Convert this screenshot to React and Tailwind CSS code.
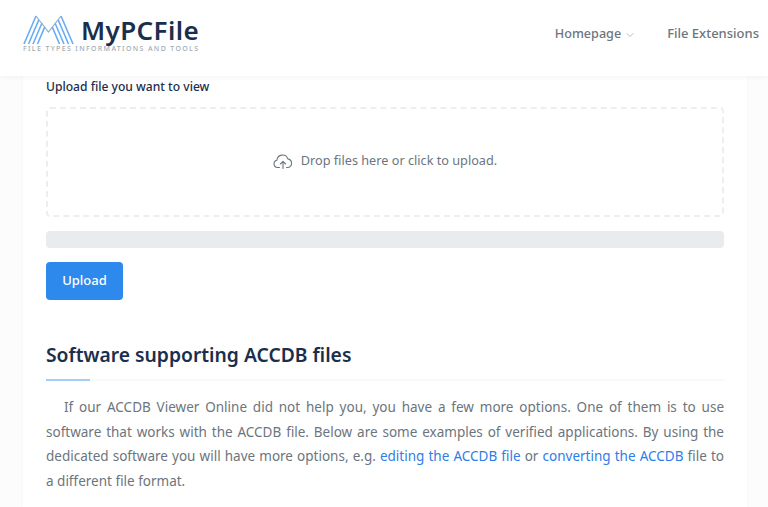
// Upload page of MyPCFile
import { ChevronDown } from 'lucide-react';

const Logo = () => (
  <div className="flex flex-col w-[178px]">
    <div className="flex items-center h-[31px]">
      <svg width="52" height="31" viewBox="0 0 52 31" className="shrink-0" fill="none">
        <g stroke="#6aadf5" strokeWidth="1.6">
          <path d="M13 1 L1 29" />
          <path d="M15.9 4.6 L5.5 29" />
          <path d="M18.9 8.2 L10 29" />
          <path d="M21.8 11.9 L14.5 29" />
          <path d="M38 1 L50 29" />
          <path d="M35.1 4.6 L45.5 29" />
          <path d="M32.1 8.2 L41 29" />
          <path d="M29.2 11.9 L36.5 29" />
        </g>
        <path d="M13 1 L25.5 17 L38 1" stroke="#8fb0cf" strokeWidth="1.2" />
      </svg>
      <span className="ml-[6px] font-['Noto_Sans'] text-[26px] leading-none font-semibold tracking-[0.4px] text-[#1b2e4b]">MyPCFile</span>
    </div>
    <span className="font-['Noto_Sans'] text-[7px] leading-[8px] -mt-[1px] font-medium tracking-[1.35px] whitespace-nowrap text-[#a3abb4]">FILE TYPES INFORMATIONS AND TOOLS</span>
  </div>
);

const CloudIcon = () => (
  <svg width="20" height="16" viewBox="0 0 20 16" fill="none" stroke="#6c757d" strokeWidth="1.1" strokeLinecap="round" strokeLinejoin="round">
    <path d="M6.5 14.5 H4.5 A3.7 3.7 0 0 1 3.9 7.2 A5.6 5.6 0 0 1 14.8 5.9 A4.4 4.4 0 0 1 15.3 14.5 H13.5" />
    <path d="M10 15.5 V8.5 M7.4 11 L10 8.4 L12.6 11" />
  </svg>
);

export default function App() {
  return (
    <div className="h-[507px] overflow-hidden bg-[#fcfcfc] font-['Noto_Sans',sans-serif] text-[14px] text-[#6c757d]">
      {/* Header */}
      <header className="relative z-10 flex items-center justify-between h-[76px] bg-white pl-[23px] pr-[9px] pb-[9px] shadow-[0_1px_6px_rgba(0,0,0,0.05)]">
        <Logo />
        <nav className="flex items-center gap-[31px] text-[13px] font-medium text-[#6c757d]">
          <a href="#" className="flex items-center gap-[3px] pt-[1px] text-[12.6px]">Homepage <ChevronDown size={12} strokeWidth={1} className="mt-[2px]" /></a>
          <a href="#">File Extensions</a>
        </nav>
      </header>

      {/* Card */}
      <main className="ml-[23px] mr-[21px] bg-white px-[23px] pt-[2px] h-[431px] shadow-[0_0_4px_rgba(0,0,0,0.03)]">
        <label className="block h-[18px] leading-[18px] text-[12.1px] font-medium text-[#1b2e4b]">Upload file you want to view</label>
        <div className="mt-[11px] flex items-center justify-center gap-[8px] h-[110px] pb-[2px] rounded-[4px] border-2 border-dashed border-[#eceef0]">
          <CloudIcon />
          <span className="text-[12.7px]">Drop files here or click to upload.</span>
        </div>
        <div className="mt-[14px] h-[17px] rounded-[4px] bg-[#e9ecef]" />
        <button className="mt-[14px] block w-[77px] h-[38px] rounded-[4px] bg-[#2e89ec] text-white text-[13px] font-medium">Upload</button>

        <h2 className="mt-[41px] h-[28px] leading-[28px] text-[19.3px] font-semibold text-[#1b2e4b]">Software supporting ACCDB files</h2>
        <div className="mt-[10px] h-[2px] bg-[#f8f9fa]">
          <div className="w-[44px] h-[2px] bg-[#a4cdf8]" />
        </div>
        <p className="mt-[14px] text-[13.5px] leading-[24.5px] text-justify indent-[18px]">
          If our ACCDB Viewer Online did not help you, you have a few more options. One of them is to use software that works with the ACCDB file. Below are some examples of verified applications. By using the dedicated software you will have more options, e.g. <a href="#" className="text-[#2e7de9]">editing the ACCDB file</a> or <a href="#" className="text-[#2e7de9]">converting the ACCDB</a> file to a different file format.
        </p>
      </main>
    </div>
  );
}
